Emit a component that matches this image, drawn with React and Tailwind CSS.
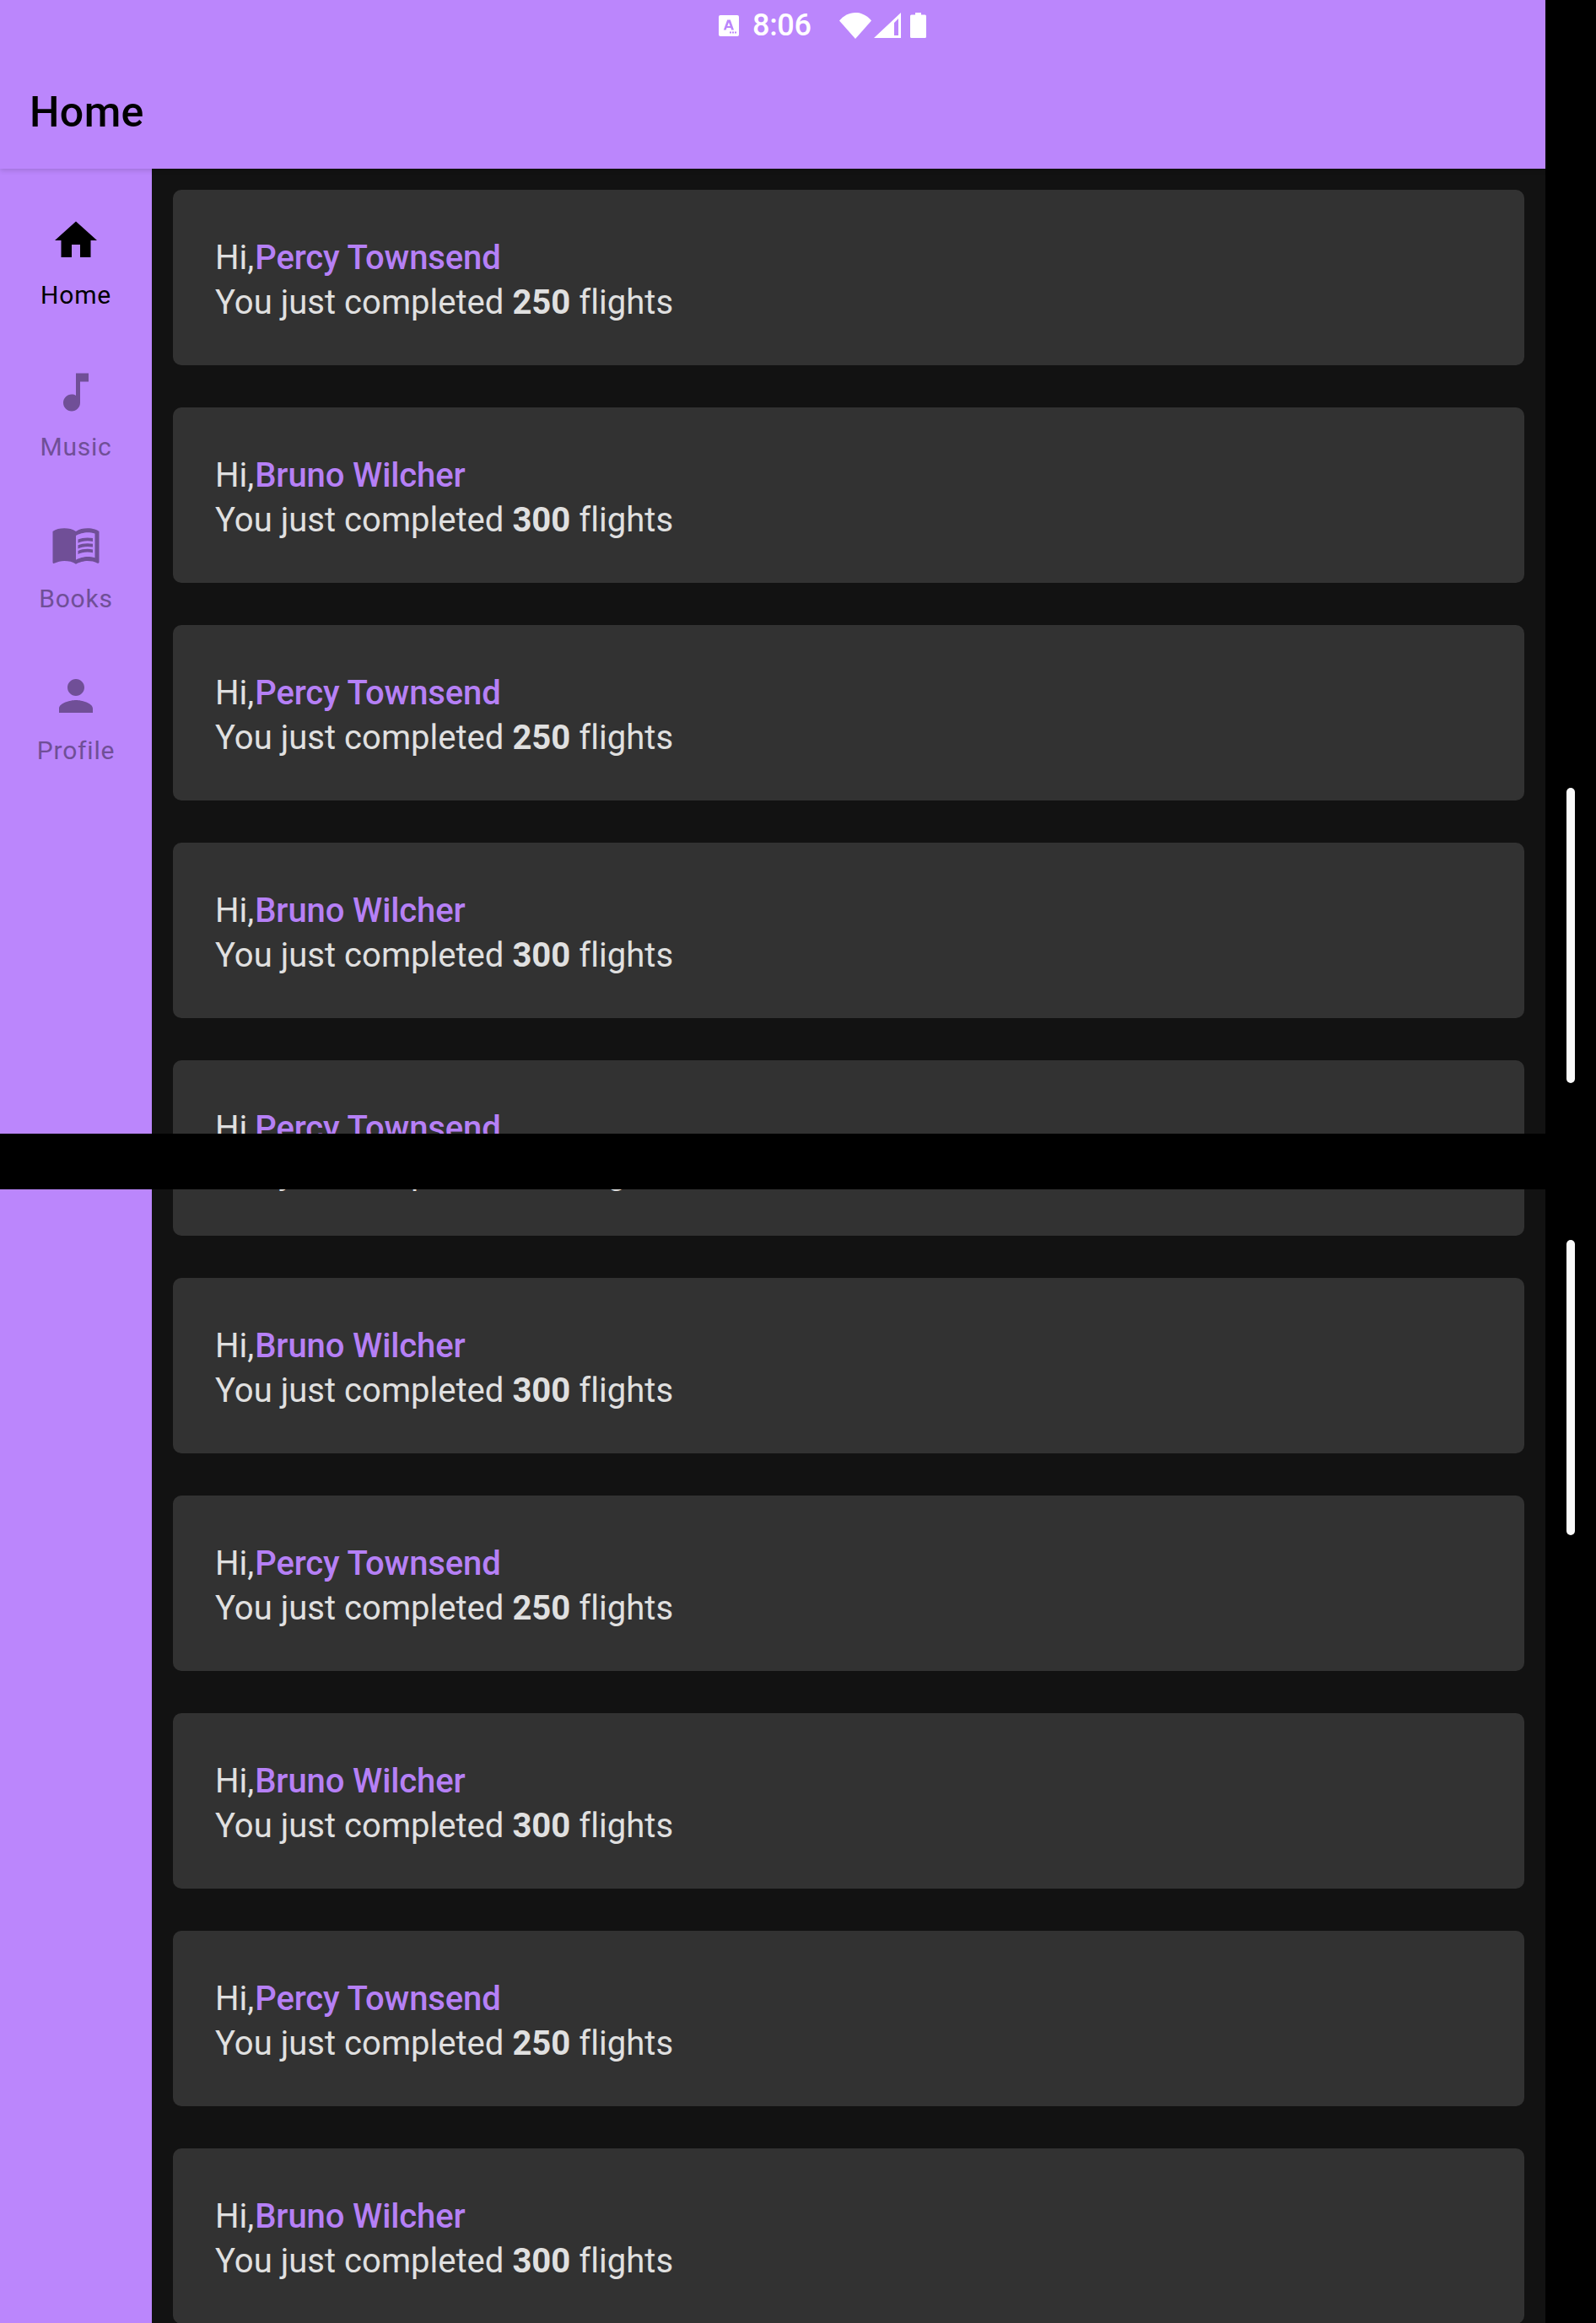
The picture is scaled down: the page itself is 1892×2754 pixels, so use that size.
import { Fragment } from 'react';

const navItems = [
  {
    label: 'Home',
    active: true,
    paths: ['M10 20v-6h4v6h5v-8h3L12 3 2 12h3v8z'],
  },
  {
    label: 'Music',
    paths: ['M12 3v10.55c-.59-.34-1.27-.55-2-.55-2.21 0-4 1.79-4 4s1.79 4 4 4 4-1.79 4-4V7h4V3h-6z'],
  },
  {
    label: 'Books',
    paths: [
      'M21 5c-1.11-.35-2.33-.5-3.5-.5-1.95 0-4.05.4-5.5 1.5-1.45-1.1-3.55-1.5-5.5-1.5S2.45 4.9 1 6v14.65c0 .25.25.5.5.5.1 0 .15-.05.25-.05C3.1 20.45 5.05 20 6.5 20c1.95 0 4.05.4 5.5 1.5 1.35-.85 3.8-1.5 5.5-1.5 1.65 0 3.35.3 4.75 1.05.1.05.15.05.25.05.25 0 .5-.25.5-.5V6c-.6-.45-1.25-.75-2-1zm0 13.5c-1.1-.35-2.3-.5-3.5-.5-1.7 0-4.15.65-5.5 1.5V8c1.35-.85 3.8-1.5 5.5-1.5 1.2 0 2.4.15 3.5.5v11.5z',
      'M17.5 10.5c.88 0 1.73.09 2.5.26V9.24c-.79-.15-1.64-.24-2.5-.24-1.7 0-3.24.29-4.5.83v1.66c1.13-.64 2.7-.99 4.5-.99z',
      'M13 12.49v1.66c1.13-.64 2.7-.99 4.5-.99.88 0 1.73.09 2.5.26V11.9c-.79-.15-1.64-.24-2.5-.24-1.7 0-3.24.3-4.5.83z',
      'M17.5 14.33c-1.7 0-3.24.29-4.5.83v1.66c1.13-.64 2.7-.99 4.5-.99.88 0 1.73.09 2.5.26v-1.52c-.79-.16-1.64-.24-2.5-.24z',
    ],
  },
  {
    label: 'Profile',
    paths: ['M12 12c2.21 0 4-1.79 4-4s-1.79-4-4-4-4 1.79-4 4 1.79 4 4 4zm0 2c-2.67 0-8 1.34-8 4v2h16v-2c0-2.66-5.33-4-8-4z'],
  },
];

const people = [
  { name: 'Percy Townsend', flights: 250 },
  { name: 'Bruno Wilcher', flights: 300 },
];

// list alternates between the two people
const cards = Array.from({ length: 10 }, (_, i) => people[i % 2]);

function NavItem({ item }) {
  return (
    <div className={`flex h-[180px] flex-col items-center ${item.active ? 'text-black' : 'text-[#704f97]'}`}>
      <svg viewBox="0 0 24 24" className="h-[60px] w-[60px]" fill="currentColor">
        {item.paths.map((d) => (
          <path key={d} d={d} />
        ))}
      </svg>
      <span className="mt-[17px] text-[30px] leading-[36px] tracking-[0.8px]">{item.label}</span>
    </div>
  );
}

function FlightCard({ person }) {
  return (
    <div className="h-[208px] shrink-0 rounded-[10px] bg-[#323232] px-[50px] pt-[54px] text-[40px] leading-[53px] tracking-[0.03px] text-[#e0e0e0]">
      <p>
        Hi,<span className="ml-px font-medium tracking-[-0.12px] text-[#b680f6]">{person.name}</span>
      </p>
      <p>
        You just completed <b className="font-bold">{person.flights}</b> flights
      </p>
    </div>
  );
}

function StatusBar() {
  return (
    <div className="flex h-[60px] items-center pl-[852px] text-white">
      <svg viewBox="0 0 24 25" className="h-[25px] w-[24px]" fill="currentColor">
        <path
          fillRule="evenodd"
          d="M2 0h20a2 2 0 0 1 2 2v21a2 2 0 0 1-2 2H2a2 2 0 0 1-2-2V2a2 2 0 0 1 2-2zM10.2 5.5 5.8 17.5h2.9l.8-2.4h4.8l.8 2.4h2.9L13.8 5.5h-3.6zM11.9 8.6l1.7 4.4h-3.3l1.6-4.4zM13 19.5h2v2h-2zM16 19.5h2v2h-2zM19 19.5h2v2h-2z"
        />
      </svg>
      <span className="ml-[16px] text-[36px] font-medium leading-none tracking-[-0.3px]">8:06</span>
      <svg viewBox="0 0 38 31" className="ml-[33px] h-[31px] w-[38px]" fill="currentColor">
        <path d="M19 31 0 9.5C5 3.8 11.6 0 19 0s14 3.8 19 9.5L19 31z" />
      </svg>
      <svg viewBox="0 0 32 30" className="ml-[3px] h-[30px] w-[32px]" fill="currentColor">
        <path fillRule="evenodd" d="M32 0v30H0L32 0zM29 7 24 12v15h5V7z" />
      </svg>
      <svg viewBox="0 0 19 30" className="ml-[11px] h-[30px] w-[19px]" fill="currentColor">
        <path d="M6 0h7v2.5h4.5A1.5 1.5 0 0 1 19 4v24.5a1.5 1.5 0 0 1-1.5 1.5h-16A1.5 1.5 0 0 1 0 28.5V4a1.5 1.5 0 0 1 1.5-1.5H6V0z" />
      </svg>
    </div>
  );
}

export default function App() {
  return (
    <div className="relative flex h-[2754px] w-[1892px] overflow-hidden bg-black font-['Roboto',sans-serif]">
      <div className="flex w-[1832px] shrink-0 flex-col">
        <header className="relative z-10 h-[200px] shrink-0 bg-[#bb86fc] shadow-[0_2px_6px_rgba(0,0,0,0.15)]">
          <StatusBar />
          <h1 className="pl-[35px] pt-[44px] text-[50px] font-medium leading-[58px] tracking-[0.4px] text-black">Home</h1>
        </header>
        <div className="flex min-h-0 flex-1">
          <nav className="w-[180px] shrink-0 bg-[#bb86fc] pt-[55px]">
            {navItems.map((item) => (
              <Fragment key={item.label}>
                <NavItem item={item} />
              </Fragment>
            ))}
          </nav>
          <main className="flex min-w-0 flex-1 flex-col gap-[50px] overflow-hidden bg-[#121212] pl-[25px] pr-[25px] pt-[25px]">
            {cards.map((person, i) => (
              <FlightCard key={i} person={person} />
            ))}
          </main>
        </div>
      </div>

      {/* black fold across the screen and the two scroll thumbs */}
      <div className="absolute left-0 top-[1344px] h-[66px] w-full bg-black" />
      <div className="absolute left-[1857px] top-[934px] h-[350px] w-[10px] rounded-full bg-[#fafafa]" />
      <div className="absolute left-[1857px] top-[1470px] h-[350px] w-[10px] rounded-full bg-[#fafafa]" />
    </div>
  );
}
